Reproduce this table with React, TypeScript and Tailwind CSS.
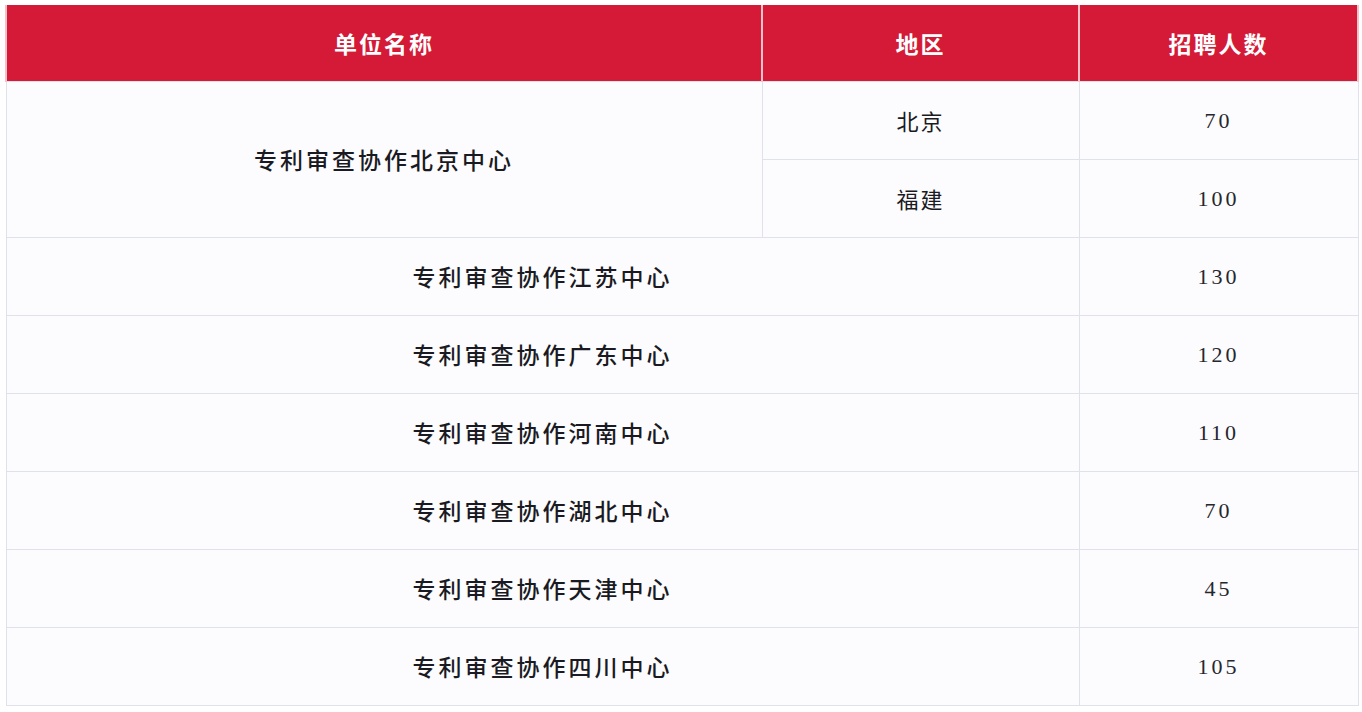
import React from 'react';

interface Row {
  name: string;
  count: number;
}

const rows: Row[] = [
  { name: '专利审查协作江苏中心', count: 130 },
  { name: '专利审查协作广东中心', count: 120 },
  { name: '专利审查协作河南中心', count: 110 },
  { name: '专利审查协作湖北中心', count: 70 },
  { name: '专利审查协作天津中心', count: 45 },
  { name: '专利审查协作四川中心', count: 105 },
];

const cjk = "font-['Noto_Sans_CJK_SC',sans-serif]";
const num = "font-['Liberation_Serif','Noto_Sans_CJK_SC',serif]";

const App: React.FC = () => {
  const td = 'border border-[#dfe2ea] text-center align-middle h-[78px] p-0';
  const th = 'border-x-2 border-[#f5c2ca] text-center align-middle h-[76px] p-0 text-white font-bold text-[23px] tracking-[2px]';

  return (
    <div className="w-[1362px] h-[712px] bg-white pt-[5px] pl-[5px]">
      <table className={`w-[1352px] border-collapse table-fixed ${cjk}`}>
        <colgroup>
          <col className="w-[756px]" />
          <col className="w-[317px]" />
          <col className="w-[279px]" />
        </colgroup>
        <thead>
          <tr className="bg-[#d41a36]">
            <th className={th}>单位名称</th>
            <th className={th}>地区</th>
            <th className={th}>招聘人数</th>
          </tr>
        </thead>
        <tbody className="bg-[#fcfcfe] text-[#1a1a22]">
          <tr>
            <td rowSpan={2} className={`${td} text-[23px] font-medium tracking-[3px]`}>
              专利审查协作北京中心
            </td>
            <td className={`${td} text-[22px] tracking-[2px]`}>北京</td>
            <td className={`${td} ${num} text-[22px] tracking-[3px] text-[#26262e]`}>70</td>
          </tr>
          <tr>
            <td className={`${td} text-[22px] tracking-[2px]`}>福建</td>
            <td className={`${td} ${num} text-[22px] tracking-[3px] text-[#26262e]`}>100</td>
          </tr>
          {rows.map((r) => (
            <tr key={r.name}>
              <td colSpan={2} className={`${td} text-[23px] font-medium tracking-[3px]`}>
                {r.name}
              </td>
              <td className={`${td} ${num} text-[22px] tracking-[3px] text-[#26262e]`}>{r.count}</td>
            </tr>
          ))}
        </tbody>
      </table>
    </div>
  );
};

export default App;
